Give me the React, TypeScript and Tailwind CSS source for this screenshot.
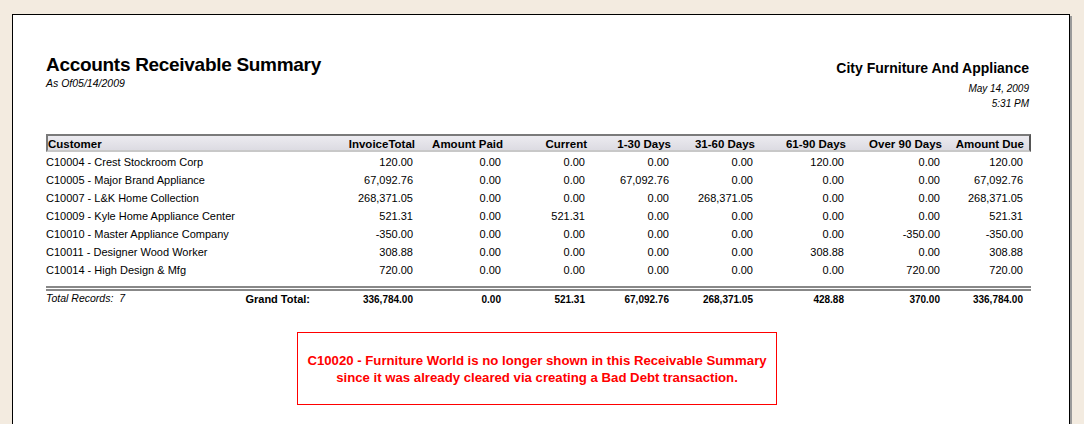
const rows = [
  ["C10004 - Crest Stockroom Corp","120.00","0.00","0.00","0.00","0.00","120.00","0.00","120.00"],
  ["C10005 - Major Brand Appliance","67,092.76","0.00","0.00","67,092.76","0.00","0.00","0.00","67,092.76"],
  ["C10007 - L&K Home Collection","268,371.05","0.00","0.00","0.00","268,371.05","0.00","0.00","268,371.05"],
  ["C10009 - Kyle Home Appliance Center","521.31","0.00","521.31","0.00","0.00","0.00","0.00","521.31"],
  ["C10010 - Master Appliance Company","-350.00","0.00","0.00","0.00","0.00","0.00","-350.00","-350.00"],
  ["C10011 - Designer Wood Worker","308.88","0.00","0.00","0.00","0.00","308.88","0.00","308.88"],
  ["C10014 - High Design & Mfg","720.00","0.00","0.00","0.00","0.00","0.00","720.00","720.00"],
];
const heads = ["InvoiceTotal","Amount Paid","Current","1-30 Days","31-60 Days","61-90 Days","Over 90 Days","Amount Due"];
const totals = ["336,784.00","0.00","521.31","67,092.76","268,371.05","428.88","370.00","336,784.00"];
const cols = "grid grid-cols-[285px_82px_88px_84px_84px_84px_91px_96px_83px]";

export default function App() {
  return (
    <div className="w-[1084px] h-[424px] bg-[#f3ebe0] pl-[12px] pt-[14px] overflow-hidden" style={{fontFamily:'"Liberation Sans", Arial, sans-serif'}}>
      <div className="w-[1058px] h-[420px] bg-white border border-black shadow-[2px_2px_0_#9a9a9a] pl-[33px] pr-[40px] text-[11px] text-black">
        <div className="flex justify-between pt-[38px]">
          <div>
            <div className="text-[19px] font-bold leading-[24px] tracking-[-0.3px]">Accounts Receivable Summary</div>
            <div className="italic text-[10.5px] leading-[12px]">As Of05/14/2009</div>
          </div>
          <div className="text-right pt-[6px]">
            <div className="text-[14px] font-bold leading-[18px]">City Furniture And Appliance</div>
            <div className="italic text-[10px] leading-[15px] mt-[4px]">May 14, 2009</div>
            <div className="italic text-[10px] leading-[15px]">5:31 PM</div>
          </div>
        </div>
        <div className={`${cols} mt-[23px] h-[18px] w-[985px] items-center border-2 border-[#7a7a7a] border-b-[#c8c8c8] border-r-[#555] bg-gradient-to-b from-[#ecebf0] to-[#dcdbe2] font-bold text-[11.5px]`}>
          <div>Customer</div>
          {heads.map((h, i) => <div key={h} className={`text-right ${i === 7 ? "pr-[1px]" : ""}`}>{h}</div>)}
        </div>
        <div className="pt-[1px]">
          {rows.map(r => (
            <div key={r[0]} className={`${cols} h-[18px] items-center`}>
              {r.map((c, i) => <div key={i} className={i === 0 ? "" : "text-right"}>{c}</div>)}
            </div>
          ))}
        </div>
        <div className="mt-[7px] w-[985px] border-t-2 border-b-2 border-[#888] h-[5px]" />
        <div className={`${cols} h-[16px] items-center font-bold text-[10px]`}>
          <div className="flex justify-between pr-[21px]">
            <span className="italic font-normal text-[10.5px]">Total Records:&nbsp; 7</span>
            <span className="text-[11px]">Grand Total:</span>
          </div>
          {totals.map((t, i) => <div key={i} className="text-right">{t}</div>)}
        </div>
        <div className="ml-[251px] mt-[25px] w-[480px] h-[73px] border border-[#ff0000] flex flex-col items-center justify-center text-[#ff0000] font-bold text-[13.2px] leading-[17px] text-center">
          <div>C10020 - Furniture World is no longer shown in this Receivable Summary</div>
          <div>since it was already cleared via creating a Bad Debt transaction.</div>
        </div>
      </div>
    </div>
  );
}
